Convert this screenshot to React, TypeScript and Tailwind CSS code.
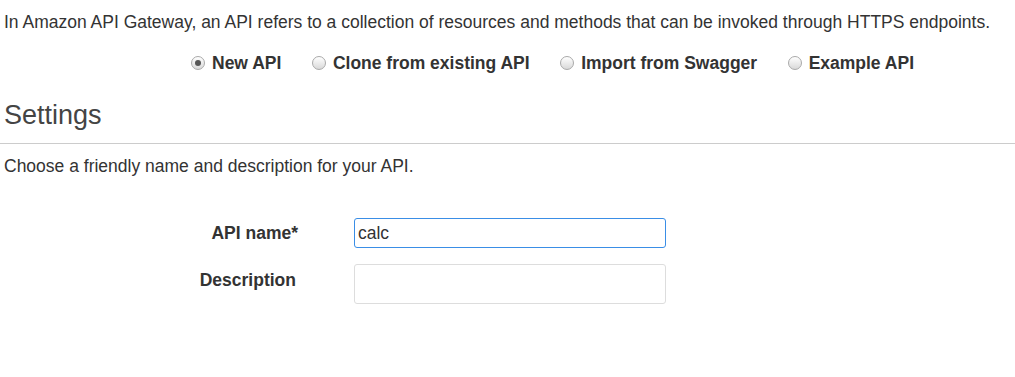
import React from "react";

function Radio({ checked, label }: { checked?: boolean; label: string }) {
  return (
    <label className="flex items-center">
      <span className="w-[14px] h-[14px] rounded-full border border-[#a9a9a9] bg-gradient-to-b from-[#ffffff] to-[#d9d9d9] flex items-center justify-center">
        {checked && <span className="w-[6px] h-[6px] rounded-full bg-[#555]" />}
      </span>
      <span className="ml-[7px] font-bold text-[17.5px] text-[#333]">{label}</span>
    </label>
  );
}

export default function App() {
  return (
    <div
      className="w-[1015px] h-[377px] bg-white text-[#333] overflow-hidden"
      style={{ fontFamily: '"Liberation Sans", Arial, sans-serif' }}
    >
      <p className="pt-[11px] pl-[4px] text-[17.5px] leading-[22px] whitespace-nowrap">
        In Amazon API Gateway, an API refers to a collection of resources and methods that can be invoked through HTTPS endpoints.
      </p>
      <div className="mt-[19px] pl-[191px] flex items-center gap-[30.5px] leading-[22px]">
        <Radio checked label="New API" />
        <Radio label="Clone from existing API" />
        <Radio label="Import from Swagger" />
        <Radio label="Example API" />
      </div>
      <h2 className="mt-[26px] pl-[4px] text-[27px] leading-[30px] text-[#444]">Settings</h2>
      <div className="mt-[13px] border-t border-[#cccccc]" />
      <p className="mt-[11px] pl-[4px] text-[17.5px] leading-[22px]">
        Choose a friendly name and description for your API.
      </p>
      <div className="mt-[41px] flex flex-col gap-[16px]">
        <div className="flex items-center">
          <div className="w-[298px] text-right font-bold text-[17.5px]">API name*</div>
          <input
            defaultValue="calc"
            className="ml-[56px] w-[312px] h-[30px] rounded-[3px] border border-[#3a8ee6] px-[3px] text-[17.5px] text-[#333] outline-none"
          />
        </div>
        <div className="flex items-start">
          <div className="w-[296px] text-right font-bold text-[17.5px] pt-[3px]">Description</div>
          <textarea className="ml-[58px] w-[312px] h-[40px] rounded-[3px] border border-[#dddddd] px-[3px] text-[17.5px] resize-none outline-none" />
        </div>
      </div>
    </div>
  );
}
